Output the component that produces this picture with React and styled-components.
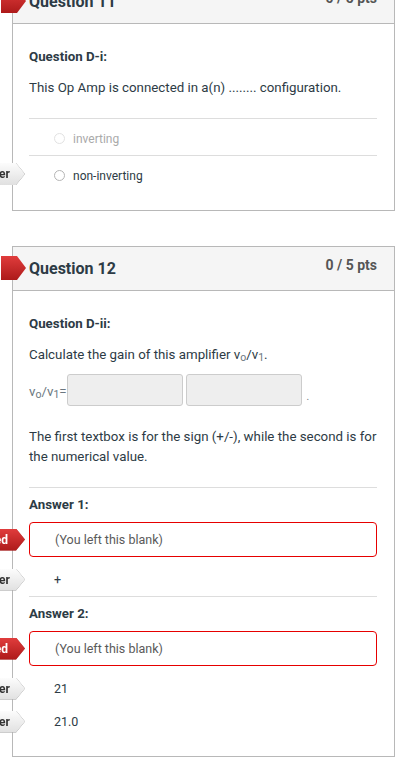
import React from 'react';
import styled, { createGlobalStyle } from 'styled-components';

const Global = createGlobalStyle`
  body {
    margin: 0;
    background: #fff;
    font-family: Roboto, "Liberation Sans", Arial, sans-serif;
    color: #2d3b45;
    overflow: hidden;
  }
`;

const Page = styled.div`
  margin-top: -21px;
  padding: 0 13px 0 12px;
`;

const Card = styled.div`
  position: relative;
  border: 1px solid #b8b8b8;
  background: #fff;
  margin-bottom: 35px;
`;

const Header = styled.div`
  position: relative;
  display: flex;
  justify-content: space-between;
  height: 43px;
  padding: 0 17px 0 16px;
  background: #f5f5f5;
  border-bottom: 1px solid #b8b8b8;
`;

const Title = styled.h2`
  margin: 0;
  align-self: center;
  font-size: 16px;
  font-weight: 700;
  color: #2d3b45;
`;

const Points = styled.div`
  padding-top: 10px;
  font-size: 14px;
  font-weight: 700;
  color: #555;
`;

const Content = styled.div`
  padding: 23px 17px ${(p) => p.bottom}px 16px;
`;

const Label = styled.div`
  font-size: 13.3px;
  line-height: 20px;
  font-weight: 700;
  color: #2d3b45;
  margin-top: ${(p) => p.top || 0}px;
`;

const Text = styled.p`
  margin: ${(p) => p.top || 11}px 0 0;
  font-size: 13.3px;
  line-height: 20px;
  color: #2d3b45;
`;

const Sub = styled.sub`
  font-size: 10.5px;
  line-height: 0;
  vertical-align: -2px;
  color: #6b7780;
`;

const Divider = styled.hr`
  margin: ${(p) => p.top || 0}px 0 0;
  border: 0;
  border-top: 1px solid #ddd;
`;

const Option = styled.div`
  position: relative;
  display: flex;
  align-items: center;
  gap: 8px;
  height: 33px;
  padding: 3px 0 0 25px;
  font-size: 12px;
  color: ${(p) => (p.disabled ? '#aaa' : '#2d3b45')};
  border-top: ${(p) => (p.line ? '1px solid #ddd' : '0')};
`;

const Radio = styled.span`
  width: 9px;
  height: 9px;
  border-radius: 50%;
  border: 1px solid ${(p) => (p.disabled ? '#e2e2e2' : '#b5b5b5')};
  background: #fff;
`;

const Formula = styled.div`
  display: flex;
  align-items: flex-end;
  margin-top: 9px;
  font-size: 13.3px;
  color: #6b7780;
`;

const Sym = styled.span`
  padding-bottom: 7px;
`;

const Field = styled.div`
  width: 114px;
  height: 30px;
  margin-right: 3px;
  background: #eee;
  border: 1px solid #ccc;
  border-radius: 3px;
`;

const Dot = styled.span`
  margin-left: 2px;
  padding-bottom: 4px;
  font-size: 10px;
`;

const Blank = styled.div`
  position: relative;
  display: flex;
  align-items: center;
  height: 33px;
  margin-top: 7px;
  padding-left: 25px;
  border: 1px solid #e60000;
  border-radius: 4px;
  font-size: 12.5px;
  color: #5a5a5a;
`;

const Answer = styled.div`
  position: relative;
  display: flex;
  align-items: center;
  height: 33px;
  margin-top: ${(p) => p.top || 0}px;
  padding-left: 25px;
  font-size: 12.5px;
  color: #2d3b45;
`;

const Tag = styled.div`
  position: absolute;
  right: calc(100% + ${(p) => p.gap}px);
  top: 50%;
  transform: translateY(-50%);
  filter: ${(p) =>
    p.red ? 'drop-shadow(0 0 0.5px rgba(120,0,0,.6))' : 'drop-shadow(0 0 0.6px rgba(0,0,0,.55))'};
`;

const TagBody = styled.div`
  height: 22px;
  display: flex;
  align-items: center;
  padding: 0 ${(p) => (p.red ? 17 : 15)}px 0 10px;
  font-size: 12px;
  font-weight: 700;
  white-space: nowrap;
  color: ${(p) => (p.red ? '#fff' : '#333')};
  background: ${(p) =>
    p.red ? 'linear-gradient(#e03c3c, #ad1a1a)' : 'linear-gradient(#fcfcfc, #e0e0e0)'};
  clip-path: polygon(0 0, calc(100% - 9px) 0, 100% 50%, calc(100% - 9px) 100%, 0 100%);
`;

const HeaderTag = styled.div`
  position: absolute;
  left: -12px;
  top: 9px;
  width: 25px;
  height: 24px;
  background: linear-gradient(#e03c3c, #ad1a1a);
  clip-path: polygon(0 0, 16px 0, 100% 50%, 16px 100%, 0 100%);
`;

function Badge({ red, gap, children }) {
  return (
    <Tag red={red} gap={gap}>
      <TagBody red={red}>{children}</TagBody>
    </Tag>
  );
}

function App() {
  return (
    <>
      <Global />
      <Page>
        <Card>
          <Header>
            <HeaderTag />
            <Title>Question 11</Title>
            <Points>0 / 5 pts</Points>
          </Header>
          <Content bottom={18}>
            <Label>Question D-i:</Label>
            <Text>This Op Amp is connected in a(n) ........ configuration.</Text>
            <Divider top={20} />
            <Option disabled>
              <Radio disabled />
              inverting
            </Option>
            <Option line>
              <Badge gap={4}>Correct Answer</Badge>
              <Radio />
              non-inverting
            </Option>
          </Content>
        </Card>

        <Card>
          <Header>
            <HeaderTag />
            <Title>Question 12</Title>
            <Points>0 / 5 pts</Points>
          </Header>
          <Content bottom={18}>
            <Label>Question D-ii:</Label>
            <Text>
              Calculate the gain of this amplifier v<Sub>o</Sub>/v<Sub>1</Sub>.
            </Text>
            <Formula>
              <Sym>
                v<Sub>o</Sub>/v<Sub>1</Sub>=
              </Sym>
              <Field />
              <Field />
              <Dot>.</Dot>
            </Formula>
            <Text top={21}>
              The first textbox is for the sign (+/-), while the second is for the numerical value.
            </Text>
            <Divider top={20} />
            <Label top={7}>Answer 1:</Label>
            <Blank>
              <Badge red gap={5}>Unanswered</Badge>
              (You left this blank)
            </Blank>
            <Answer top={6}>
              <Badge gap={4}>Correct Answer</Badge>+
            </Answer>
            <Divider />
            <Label top={7}>Answer 2:</Label>
            <Blank>
              <Badge red gap={5}>Unanswered</Badge>
              (You left this blank)
            </Blank>
            <Answer top={6}>
              <Badge gap={4}>Correct Answer</Badge>21
            </Answer>
            <Answer>
              <Badge gap={4}>Correct Answer</Badge>21.0
            </Answer>
          </Content>
        </Card>
      </Page>
    </>
  );
}

export default App;
